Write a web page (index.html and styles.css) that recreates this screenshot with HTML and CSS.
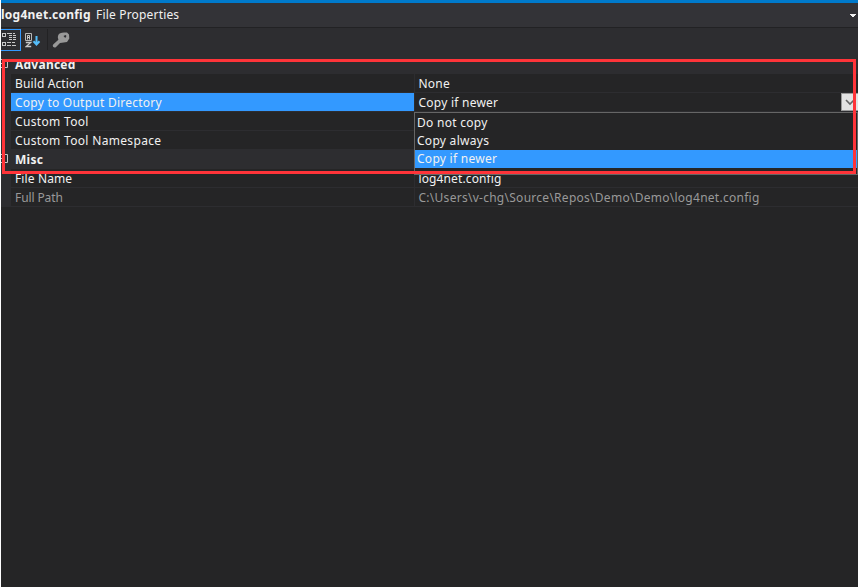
FILE: index.html
```
<!DOCTYPE html>
<html lang="en">
<head>
<meta charset="utf-8">
<title>File Properties</title>
<link rel="stylesheet" href="styles.css">
</head>
<body>
<main class="panel">
  <header class="title"><b>log4net.config</b><span class="kind">File Properties</span>
    <svg class="menu-arrow" width="6" height="3" shape-rendering="crispEdges"><path d="M0 0h6v1H5v1H4v1H2V2H1V1H0z" fill="#f1f1f1"/></svg>
  </header>
  <div class="toolbar">
    <span class="tool active">
      <svg width="16" height="16" shape-rendering="crispEdges"><g fill="none" stroke="#c8c8c8"><path d="M1.5 1.5h3v3h-3zM1.5 10.5h3v3h-3z"/><path d="M6 1.5h5M12 1.5h2M8 3.5h3M12 3.5h3M8 5.5h3M12 5.5h3M8 7.5h3M12 7.5h3M6 10.5h4M11 10.5h3M6 13.5h4M11 13.5h4"/></g></svg>
    </span>
    <span class="tool sort">
      <svg width="16" height="16"><path d="M.5 1.5h6v7h-6z" fill="none" stroke="#b8b8b8"/><path d="M2.5 7.5v-4h2v4M2.5 5.5h2" fill="none" stroke="#c8c8c8"/><path d="M.8 10.5h5L1.2 14.5h5" fill="none" stroke="#c8c8c8" stroke-width="1.3"/><path d="M11.5 4v8M8.5 9.3l3 3.2 3-3.2" fill="none" stroke="#55bdfa" stroke-width="2"/></svg>
    </span>
    <i class="separator"></i>
    <span class="tool wrench">
      <svg width="18" height="17"><path d="M5.8 5.2Q6 1.2 10 .8l2-.3h3l2 2 .3 4-2.3 3.5-5 .8-2 .2-4.2 4.2q-1.5 1-2.7-.4-.9-1.4.3-2.6l5-4.4z" fill="#999"/><path d="m11.5 4 2-1 1 1-1.3 2z" fill="#2d2d30"/></svg>
    </span>
  </div>
  <section class="grid">
    <div class="row group"><svg class="fold" width="8" height="9"><path d="M0 .5h6.5v8H0M0 4.5h4" fill="none" stroke="#c8c8c8"/></svg><b>Advanced</b></div>
    <div class="row"><span class="name tight">Build Action</span><span class="value">None</span></div>
    <div class="row selected"><span class="name">Copy to Output Directory</span><span class="value">Copy if newer</span>
      <span class="drop"><svg width="10" height="7"><path d="m1 1 4 4 4-4" fill="none" stroke="#666" stroke-width="1.6"/></svg></span>
      <div class="options"><div>Do not copy</div><div>Copy always</div><div class="chosen">Copy if newer</div></div>
    </div>
    <div class="row"><span class="name wide">Custom Tool</span><span class="value"></span></div>
    <div class="row"><span class="name wide">Custom Tool Namespace</span><span class="value"></span></div>
    <div class="row group"><svg class="fold" width="8" height="9"><path d="M0 .5h6.5v8H0M0 4.5h4" fill="none" stroke="#c8c8c8"/></svg><b>Misc</b></div>
    <div class="row"><span class="name tight">File Name</span><span class="value tight">log4net.config</span></div>
    <div class="row readonly"><span class="name narrow">Full Path</span><span class="value path">C:\Users\v-chg\Source\Repos\Demo\Demo\log4net.config</span></div>
  </section>
  <div class="highlight"></div>
</main>
</body>
</html>
```
FILE: styles.css
```
* { box-sizing: border-box; }
body { margin: 0; background: #fff; overflow: hidden; }
.panel { position: relative; width: 857px; height: 587px; margin-left: 1px; overflow: hidden; background: #252526; color: #f1f1f1; font: 12px/18px "Noto Sans", sans-serif; letter-spacing: .24px; white-space: nowrap; }
.title { display: flex; align-items: center; height: 28px; padding-right: 2px; border-top: 3px solid #007acc; border-bottom: 1px solid #222224; background: #333337; }
.title b { width: 95px; }
.kind { letter-spacing: .18px; }
.menu-arrow { margin-left: auto; }
.toolbar { display: flex; height: 27px; padding-top: 1px; background: #2d2d30; }
.tool { display: flex; align-items: center; height: 22px; }
.active { width: 20px; border: 1px solid #3399ff; border-left: 0; }
.sort { width: 26px; padding-left: 4px; }
.separator { width: 1px; height: 21px; background: #222224; }
.wrench { padding-left: 4px; }
.row { position: relative; display: flex; height: 19px; border-left: 10px solid #2d2d30; line-height: 20px; }
.name, .value { height: 19px; border-bottom: 1px solid #2d2d30; }
.name { width: 403px; padding-left: 4px; }
.wide { letter-spacing: .33px; }
.value { flex: 1; padding-left: 3.5px; border-left: 1px solid #2d2d30; }
.tight { letter-spacing: .12px; }
.narrow { letter-spacing: -.1px; }
.path { letter-spacing: .27px; }
.group { padding-left: 4px; background: #2d2d30; }
.fold { position: absolute; left: -10px; top: 4px; }
.selected .name { background: #3399ff; }
.drop { position: absolute; right: 0; top: 0; display: flex; align-items: center; justify-content: center; width: 17px; height: 18px; border: 1px solid #999; border-right: 0; background: #e3e3e3; }
.options { position: absolute; z-index: 1; left: 403px; right: 0; top: 19px; height: 63px; padding-top: 1px; border: 1px solid #666; background: #252526; line-height: 18px; }
.options div { height: 18px; padding-left: 2px; letter-spacing: .28px; }
.options .chosen { background: #3399ff; }
.readonly { color: #999; }
.highlight { position: absolute; z-index: 2; left: 1px; top: 59px; width: 854px; height: 115px; border: 3px solid #ff3439; }
```
